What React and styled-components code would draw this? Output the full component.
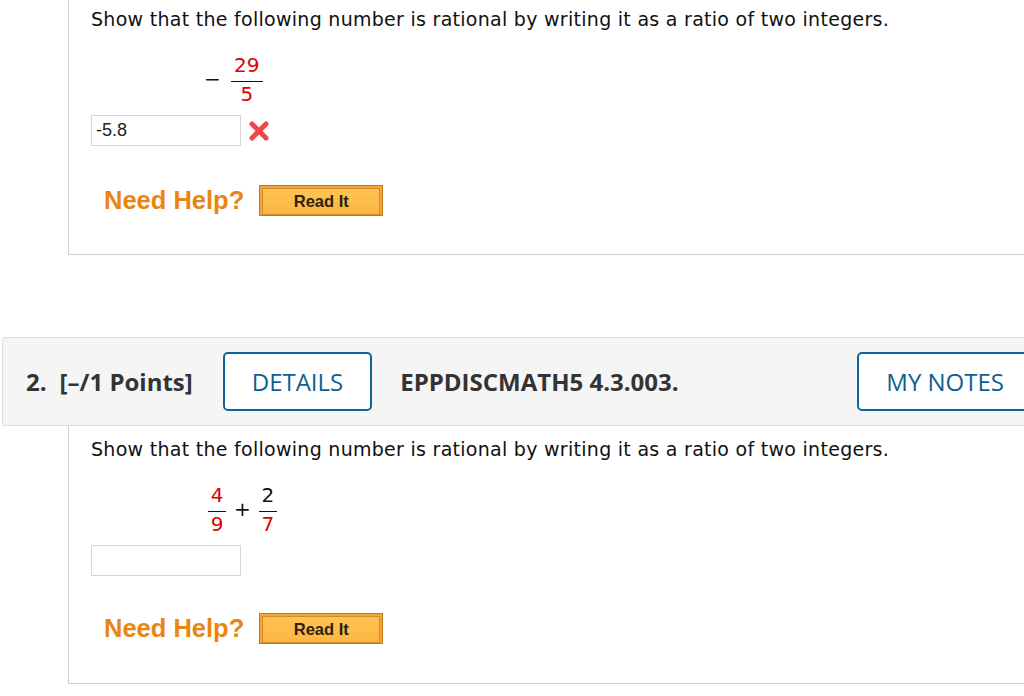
import styled, { createGlobalStyle } from 'styled-components';

const GlobalStyle = createGlobalStyle`
  html, body {
    margin: 0;
    padding: 0;
    background: #fff;
    overflow: hidden;
  }
`;

const Page = styled.div`
  width: 1024px;
  height: 696px;
  overflow: hidden;
`;

const QuestionBody = styled.div`
  margin-left: 68px;
  width: 1100px;
  height: ${p => p.$height}px;
  box-sizing: border-box;
  border-left: 1px solid #cfcfcf;
  border-bottom: 1px solid #cfcfcf;
  padding: ${p => p.$top}px 0 0 22px;
`;

const Prompt = styled.p`
  margin: 0;
  font-family: "DejaVu Sans", Verdana, sans-serif;
  font-size: 19px;
  letter-spacing: 0.28px;
  line-height: 24px;
  color: #111;
`;

const MathRow = styled.div`
  display: flex;
  align-items: center;
  gap: ${p => p.$gap || 10}px;
  margin: ${p => p.$mt}px 0 0 ${p => p.$ml}px;
  font-family: "DejaVu Sans", Verdana, sans-serif;
  font-size: 20px;
  color: #111;
  height: 52px;
`;

const Fraction = styled.span`
  display: inline-flex;
  flex-direction: column;
  align-items: center;
  min-width: ${p => p.$w || 18}px;
`;

const Num = styled.span`
  display: block;
  width: 100%;
  text-align: center;
  line-height: 24px;
  padding-bottom: 4px;
  border-bottom: 1px solid #111;
  color: ${p => (p.$red ? '#e00000' : '#111')};
`;

const Den = styled.span`
  display: block;
  line-height: 24px;
  color: ${p => (p.$red ? '#e00000' : '#111')};
`;

const Op = styled.span`
  line-height: 1;
`;

const AnswerRow = styled.div`
  display: flex;
  align-items: center;
  gap: 7px;
  margin-top: ${p => p.$mt}px;
`;

const AnswerBox = styled.div`
  width: 150px;
  height: 31px;
  box-sizing: border-box;
  border: 1px solid #d6d6d6;
  padding: 0 4px;
  display: flex;
  align-items: center;
  font-family: "Liberation Sans", Arial, sans-serif;
  font-size: 18px;
  color: #222;
`;

const HelpRow = styled.div`
  display: flex;
  align-items: center;
  gap: 15px;
  margin: ${p => p.$mt}px 0 0 13px;
`;

const HelpLabel = styled.span`
  font-family: "Liberation Sans", Arial, sans-serif;
  font-weight: bold;
  font-size: 25.5px;
  color: #ea8511;
`;

const ReadIt = styled.button`
  width: 124px;
  height: 31px;
  padding: 2px;
  box-sizing: border-box;
  border: 1px solid #c4781c;
  background: #f7a53a;
  cursor: pointer;

  span {
    display: flex;
    align-items: center;
    justify-content: center;
    height: 100%;
    border: 1px solid #d48a2a;
    background: linear-gradient(#ffc352, #fdb642);
    font-family: "Liberation Sans", Arial, sans-serif;
    font-weight: bold;
    font-size: 16.5px;
    color: #2b2210;
  }
`;

const Spacer = styled.div`
  height: ${p => p.$h}px;
`;

const Header = styled.div`
  margin-left: 2px;
  width: 1100px;
  height: 89px;
  box-sizing: border-box;
  border: 1px solid #dcdcdc;
  border-radius: 3px;
  background: #f5f5f5;
  display: flex;
  align-items: center;
  padding: 0 68px 0 23px;
  font-family: "Open Sans", sans-serif;
`;

const HeadText = styled.span`
  font-weight: bold;
  font-size: 24px;
  color: #333;
  margin-left: ${p => p.$ml || 0}px;
  white-space: nowrap;
`;

const OutlineButton = styled.button`
  height: 59px;
  box-sizing: border-box;
  padding: 0 27px;
  margin-left: ${p => (p.$auto ? 'auto' : `${p.$ml}px`)};
  border: 2px solid #0f6399;
  border-radius: 5px;
  background: #fff;
  font-family: "Open Sans", sans-serif;
  font-weight: 500;
  font-size: 24px;
  color: #0f5f93;
  white-space: nowrap;
`;

const WrongMark = () => (
  <svg width="22" height="22" viewBox="0 0 22 22">
    <path d="M4 4 L18 18 M18 4 L4 18" stroke="#f0474f" strokeWidth="5" strokeLinecap="round" />
  </svg>
);

const NeedHelp = ({ mt }) => (
  <HelpRow $mt={mt}>
    <HelpLabel>Need Help?</HelpLabel>
    <ReadIt><span>Read It</span></ReadIt>
  </HelpRow>
);

const PROMPT = 'Show that the following number is rational by writing it as a ratio of two integers.';

export default function App() {
  return (
    <Page>
      <GlobalStyle />
      <QuestionBody $height={255} $top={7}>
        <Prompt>{PROMPT}</Prompt>
        <MathRow $mt={22} $ml={113}>
          <Op>−</Op>
          <Fraction $w={32}>
            <Num $red>29</Num>
            <Den $red>5</Den>
          </Fraction>
        </MathRow>
        <AnswerRow $mt={10}>
          <AnswerBox>-5.8</AnswerBox>
          <WrongMark />
        </AnswerRow>
        <NeedHelp mt={39} />
      </QuestionBody>

      <Spacer $h={82} />

      <Header>
        <HeadText>2.</HeadText>
        <HeadText $ml={13}>[–/1 Points]</HeadText>
        <OutlineButton $ml={30}>DETAILS</OutlineButton>
        <HeadText $ml={28}>EPPDISCMATH5 4.3.003.</HeadText>
        <OutlineButton $auto>MY NOTES</OutlineButton>
      </Header>

      <QuestionBody $height={258} $top={11}>
        <Prompt>{PROMPT}</Prompt>
        <MathRow $mt={22} $ml={117} $gap={8}>
          <Fraction>
            <Num $red>4</Num>
            <Den $red>9</Den>
          </Fraction>
          <Op>+</Op>
          <Fraction>
            <Num>2</Num>
            <Den $red>7</Den>
          </Fraction>
        </MathRow>
        <AnswerRow $mt={10}>
          <AnswerBox />
        </AnswerRow>
        <NeedHelp mt={37} />
      </QuestionBody>
    </Page>
  );
}
